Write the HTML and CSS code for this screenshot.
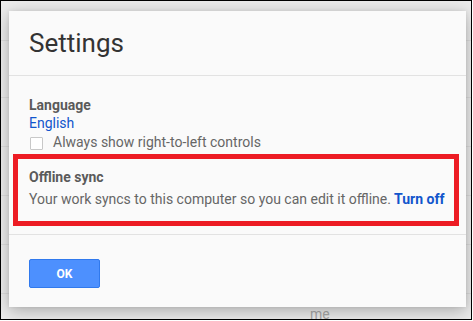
FILE: index.html
```html
<!DOCTYPE html>
<html>
<head>
<meta charset="utf-8">
<link rel="stylesheet" href="styles.css">
</head>
<body>
<div class="frame">
  <div class="page">
    <div class="row row-head"></div>
    <div class="row row-a"></div>
    <div class="row"></div>
    <div class="row"></div>
    <div class="row"></div>
    <div class="row"></div>
    <div class="row row-last"><span class="ghost">me</span></div>
  </div>
  <div class="dialog">
    <div class="dlg-head">
      <h1 class="title">Settings</h1>
    </div>
    <div class="dlg-body">
      <div class="label">Language</div>
      <a class="link">English</a>
      <label class="check-row"><span class="checkbox"></span><span>Always show right-to-left controls</span></label>
      <div class="highlight">
        <div class="label">Offline sync</div>
        <div class="text">Your work syncs to this computer so you can edit it offline.<a class="link strong"> Turn off</a></div>
      </div>
    </div>
    <div class="dlg-foot">
      <button class="ok">OK</button>
    </div>
  </div>
</div>
</body>
</html>
```

FILE: styles.css
```css
* { box-sizing: border-box; }
html, body { margin: 0; padding: 0; }
body { width: 473px; height: 321px; overflow: hidden; font-family: Roboto, "Liberation Sans", sans-serif; }
.frame {
  position: relative;
  width: 472px;
  height: 320px;
  border: 1px solid #000;
  background: #ececec;
  overflow: hidden;
}
.page { display: flex; flex-direction: column; }
.row { height: 49px; flex: none; border-bottom: 1px solid #dedede; }
.row-head { height: 40px; }
.row-a { height: 57px; }
.row-last { border-bottom: 0; padding: 13px 0 0 309px; line-height: 14px; }
.ghost { font-size: 14px; color: #a8a8a8; }
.dialog {
  position: absolute;
  left: 8px;
  top: 10px;
  width: 457px;
  height: 296px;
  background: #fafafa;
  box-shadow: 0 4px 16px rgba(0,0,0,0.28), 0 0 4px rgba(0,0,0,0.08);
  display: flex;
  flex-direction: column;
}
.dlg-head {
  height: 65px;
  border-bottom: 1px solid #e2e2e2;
  padding: 0 20px;
}
.title {
  margin: 0;
  padding-top: 16px;
  font-size: 26px;
  line-height: 32px;
  font-weight: 400;
  color: #333;
}
.dlg-body {
  padding: 20px 20px 8px;
  border-bottom: 1px solid #e2e2e2;
  display: flex;
  flex-direction: column;
  font-size: 14px;
  line-height: 18px;
}
.label { font-weight: 700; color: #5a5a5a; }
.link { color: #15c; text-decoration: none; }
.strong { font-weight: 700; }
.check-row {
  margin-top: 1px;
  display: flex;
  align-items: center;
  gap: 10px;
  color: #666;
  padding-left: 1px;
}
.checkbox {
  width: 13px;
  height: 13px;
  border: 1px solid #c8c8c8;
  border-radius: 1px;
  background: #fff;
  margin-top: 2px;
}
.highlight {
  margin: 3px -13px 0 -16px;
  border: 5px solid #ed1c24;
  padding: 9px 8px 13px 11px;
}
.text { margin-top: 4px; color: #666; }
.dlg-foot { padding: 24px 20px 0; }
.ok {
  width: 71px;
  height: 29px;
  background: #4d90fe;
  border: 1px solid #3079ed;
  border-radius: 2px;
  color: #fff;
  font-family: Roboto, "Liberation Sans", sans-serif;
  font-weight: 700;
  font-size: 12px;
  padding: 0;
}
```
